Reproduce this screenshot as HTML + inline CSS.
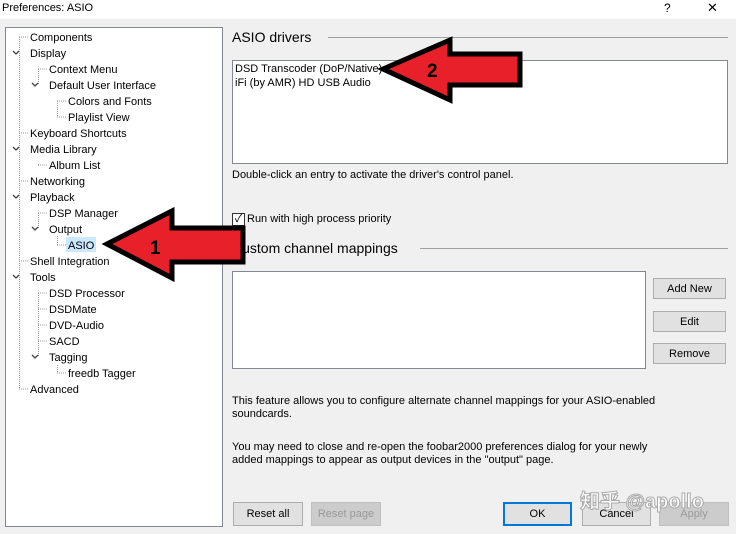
<!DOCTYPE html>
<html><head><style>
*{margin:0;padding:0;box-sizing:border-box}
body{width:736px;height:534px;background:#f0f0f0;font-family:"Liberation Sans","Noto Sans CJK SC",sans-serif;font-size:11px;color:#000;position:relative;overflow:hidden}
.a{position:absolute;white-space:nowrap}
.title{position:absolute;left:0;top:0;width:736px;height:19px;background:#fff}
.tree{position:absolute;left:5px;top:27px;width:218px;height:500px;background:#fff;border:1px solid #828790}
.box{position:absolute;background:#fff;border:1px solid #828790}
.btn{position:absolute;background:#e1e1e1;border:1px solid #adadad;text-align:center;line-height:20px;font-size:11px}
.line{position:absolute;height:1px;background:#a0a0a0}
.t div{position:absolute;white-space:nowrap}
</style></head><body>
<div class="title"></div>
<div class="a" style="left:2px;top:2px;font-size:11px">Preferences: ASIO</div>
<div class="a" style="left:664px;top:1px;font-size:12px">?</div>
<div class="a" style="left:707px;top:0px;font-size:13px">✕</div>

<div class="tree"></div>
<svg class="a" style="left:0;top:0" width="230" height="400">
<g stroke="#999" stroke-dasharray="1,1" fill="none">
<path d="M19.5 37V389M19 37H28M19 133H28M19 181H28M19 261H28M19 389H28"/>
<path d="M38.5 69V84M38 69H47M38.5 165V164M38 165H47M38.5 213V228M38 213H47M38.5 293V356M38 293H47M38 309H47M38 325H47M38 341H47"/>
<path d="M57.5 101V116M57 101H66M57 117H66M57.5 236V245M57 245H66M57.5 365V373M57 373H66"/>
</g>
<g stroke="#444" stroke-width="1.3" fill="none">
<path d="M13 51l3 3 3-3M13 147l3 3 3-3M13 195l3 3 3-3M13 275l3 3 3-3"/>
<path d="M32 83l3 3 3-3M32 227l3 3 3-3M32 355l3 3 3-3"/>
</g>
</svg>
<div class="a" style="left:66px;top:237px;width:30px;height:15px;background:#cce8ff"></div>
<div class="t" style="position:absolute;left:0;top:1px">
<div style="left:30px;top:31px">Components</div>
<div style="left:30px;top:47px">Display</div>
<div style="left:49px;top:63px">Context Menu</div>
<div style="left:49px;top:79px">Default User Interface</div>
<div style="left:68px;top:95px">Colors and Fonts</div>
<div style="left:68px;top:111px">Playlist View</div>
<div style="left:30px;top:127px">Keyboard Shortcuts</div>
<div style="left:30px;top:143px">Media Library</div>
<div style="left:49px;top:159px">Album List</div>
<div style="left:30px;top:175px">Networking</div>
<div style="left:30px;top:191px">Playback</div>
<div style="left:49px;top:207px">DSP Manager</div>
<div style="left:49px;top:223px">Output</div>
<div style="left:68px;top:239px">ASIO</div>
<div style="left:30px;top:255px">Shell Integration</div>
<div style="left:30px;top:271px">Tools</div>
<div style="left:49px;top:287px">DSD Processor</div>
<div style="left:49px;top:303px">DSDMate</div>
<div style="left:49px;top:319px">DVD-Audio</div>
<div style="left:49px;top:335px">SACD</div>
<div style="left:49px;top:351px">Tagging</div>
<div style="left:68px;top:367px">freedb Tagger</div>
<div style="left:30px;top:383px">Advanced</div>
</div>

<div class="a" style="left:232px;top:29px;font-size:14px">ASIO drivers</div>
<div class="line" style="left:328px;top:37px;width:400px"></div>
<div class="box" style="left:232px;top:60px;width:496px;height:104px"></div>
<div class="a" style="left:235px;top:63px">DSD Transcoder (DoP/Native)</div>
<div class="a" style="left:235px;top:77px">iFi (by AMR) HD USB Audio</div>
<div class="a" style="left:232px;top:169px">Double-click an entry to activate the driver's control panel.</div>
<div class="a" style="left:232px;top:213px;width:13px;height:13px;border:1px solid #333;background:#fff;font-size:11px;line-height:11px;text-align:center">✓</div>
<div class="a" style="left:247px;top:213px">Run with high process priority</div>
<div class="a" style="left:232px;top:240px;font-size:14px">Custom channel mappings</div>
<div class="line" style="left:420px;top:248px;width:308px"></div>
<div class="box" style="left:232px;top:271px;width:414px;height:98px"></div>
<div class="btn" style="left:653px;top:278px;width:73px;height:21px">Add New</div>
<div class="btn" style="left:653px;top:311px;width:73px;height:21px">Edit</div>
<div class="btn" style="left:653px;top:343px;width:73px;height:21px">Remove</div>
<div class="a" style="left:232px;top:395px;line-height:13px">This feature allows you to configure alternate channel mappings for your ASIO-enabled<br>soundcards.</div>
<div class="a" style="left:232px;top:441px;line-height:13px">You may need to close and re-open the foobar2000 preferences dialog for your newly<br>added mappings to appear as output devices in the "output" page.</div>

<div class="btn" style="left:233px;top:502px;width:70px;height:24px;line-height:22px">Reset all</div>
<div class="btn" style="left:311px;top:502px;width:70px;height:24px;line-height:22px;color:#999;background:#ccc;border-color:#bfbfbf">Reset page</div>
<div class="btn" style="left:503px;top:502px;width:69px;height:24px;line-height:20px;border:2px solid #0078d7">OK</div>
<div class="btn" style="left:582px;top:502px;width:69px;height:24px;line-height:22px">Cancel</div>
<div class="btn" style="left:659px;top:502px;width:70px;height:24px;line-height:22px;color:#999;background:#ccc;border-color:#bfbfbf">Apply</div>
<div class="a" style="left:580px;top:485px;font-size:20px;color:#fff;-webkit-text-stroke:1px #aaa;font-weight:bold">知乎 @apollo</div>

<svg class="a" style="left:0;top:0" width="736" height="534">
<g fill="#e8202a" stroke="#000" stroke-width="5" stroke-linejoin="miter">
<path d="M107 244L172 211V228H243V262H172V278Z"/>
<path d="M383 69L450 40V54H520V85H450V100Z"/>
</g>
<text x="150" y="254" font-family="Liberation Sans" font-weight="bold" font-size="19">1</text>
<text x="427" y="77" font-family="Liberation Sans" font-weight="bold" font-size="19">2</text>
</svg>
</body></html>
